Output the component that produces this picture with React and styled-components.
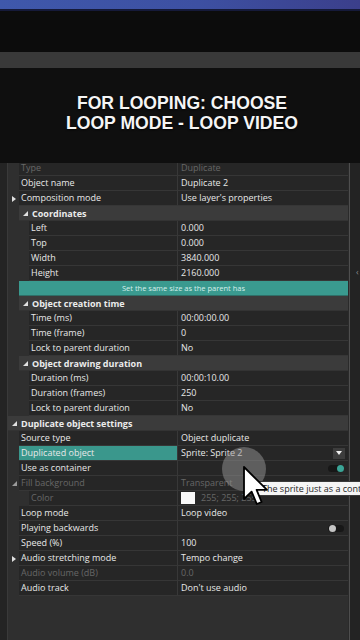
import React from 'react';
import styled, { createGlobalStyle } from 'styled-components';

const GlobalStyle = createGlobalStyle`
  html, body { margin: 0; padding: 0; background: #0e0e0e; }
  body { width: 360px; height: 640px; overflow: hidden; }
  #root { width: 360px; height: 640px; }
`;

const Screen = styled.div`
  width: 360px;
  height: 640px;
  display: flex;
  flex-direction: column;
  overflow: hidden;
  position: relative;
  font-family: "Open Sans", "Noto Sans", sans-serif;
`;

const TopBar = styled.div`
  flex: none;
  height: 9px;
  background: linear-gradient(90deg, #3f58ab 0%, #3d50a2 55%, #3b3f8b 100%);
  border-bottom: 2px solid #151a3a;
`;

const BlackBand = styled.div`
  flex: none;
  height: 41px;
  background: #0c0c0c;
`;

const GrayStrip = styled.div`
  flex: none;
  height: 16px;
  background: #393939;
`;

const Caption = styled.div`
  flex: none;
  height: 95px;
  background: #0f0f0f;
  display: flex;
  align-items: center;
  justify-content: center;
  padding: 0 0 5px 4px;
  box-sizing: border-box;
`;

const CaptionText = styled.div`
  font-family: "Liberation Sans", Arial, sans-serif;
  font-weight: 700;
  font-size: 17.6px;
  line-height: 20px;
  color: #f5f5f5;
  text-align: center;
  text-shadow: 0 1px 2px rgba(0, 0, 0, 0.8);
`;

const Panel = styled.div`
  flex: 1;
  display: flex;
  background: #262626;
  overflow: hidden;
`;

const LeftRail = styled.div`
  flex: none;
  width: 7px;
  background: #242424;
  border-right: 1px solid #3a3a3a;
`;

const Tree = styled.div`
  flex: none;
  width: 340px;
  margin-top: -2px;
  background: #2f2f2f;
  display: flex;
  flex-direction: column;
`;

const RightGap = styled.div`
  flex: none;
  width: 1px;
  background: #2a2a2a;
`;

const RightLine = styled.div`
  flex: none;
  width: 1px;
  background: #4e4e4e;
`;

const RightArea = styled.div`
  flex: 1;
  background: #232323;
  color: #8a8a8a;
  font-size: 9px;
  padding: 102px 0 0 6px;
`;

const Row = styled.div`
  flex: none;
  display: flex;
  height: 15px;
  font-size: 9px;
`;

const Indent = styled.div`
  flex: none;
  width: ${(p) => p.$w}px;
  display: flex;
  align-items: center;
  padding-left: 4px;
  box-sizing: border-box;
`;

const NameCell = styled.div`
  flex: 1;
  min-width: 0;
  background: ${(p) => (p.$selected ? '#3a978c' : '#262626')};
  border-bottom: 1px solid #363636;
  border-right: 1px solid #383838;
  color: ${(p) => (p.$disabled ? '#676767' : '#e8e8e8')};
  padding-left: 2px;
  line-height: 14px;
  white-space: nowrap;
  overflow: hidden;
`;

const ValueCell = styled.div`
  flex: none;
  width: 170px;
  box-sizing: border-box;
  background: #262626;
  border-bottom: 1px solid #363636;
  color: ${(p) => (p.$disabled ? '#676767' : '#e8e8e8')};
  padding: 0 3px 0 3px;
  display: flex;
  align-items: center;
  gap: 6px;
  line-height: 14px;
  white-space: nowrap;
  overflow: hidden;
`;

const HeaderRow = styled.div`
  flex: none;
  height: 15px;
  margin-left: ${(p) => p.$indent}px;
  background: #3b3b3b;
  border-bottom: 1px solid #333;
  display: flex;
  align-items: center;
  gap: 4px;
  padding-left: 4px;
  box-sizing: border-box;
  font-size: 9px;
  font-weight: 700;
  color: #ececec;
`;

const ActionRow = styled.div`
  flex: none;
  height: 15px;
  margin-left: 11px;
  background: #3a9a8f;
  border-bottom: 1px solid #2f6f68;
  box-sizing: border-box;
  display: flex;
  align-items: center;
  justify-content: center;
  font-size: 7.5px;
  color: #d6efeb;
`;

const Swatch = styled.span`
  flex: none;
  width: 14px;
  height: 12px;
  background: #f8f8f8;
`;

const DropButton = styled.span`
  margin-left: auto;
  width: 12px;
  height: 11px;
  background: #3d3d3d;
  display: flex;
  align-items: center;
  justify-content: center;
`;

const Toggle = styled.span`
  margin-left: auto;
  margin-right: 1px;
  position: relative;
  width: 16px;
  height: 7px;
  border-radius: 4px;
  background: #171717;
`;

const Knob = styled.span`
  position: absolute;
  top: 0;
  ${(p) => (p.$on ? 'right: 0;' : 'left: 1px;')}
  width: 7px;
  height: 7px;
  border-radius: 50%;
  background: ${(p) => (p.$on ? '#3ba597' : '#c4c4c4')};
`;

const ClickHalo = styled.div`
  position: absolute;
  left: 222px;
  top: 447px;
  width: 44px;
  height: 44px;
  border-radius: 50%;
  background: rgba(150, 150, 150, 0.5);
`;

const Tooltip = styled.div`
  position: absolute;
  left: 257px;
  top: 481px;
  width: 103px;
  height: 15px;
  box-sizing: border-box;
  background: #f5f5f5;
  border: 1px solid #3a3a3a;
  border-right: none;
  color: #1e1e1e;
  font-size: 9px;
  line-height: 13px;
  padding-left: 4px;
  white-space: nowrap;
  overflow: hidden;
`;

const Cursor = styled.svg`
  position: absolute;
  left: 243px;
  top: 466px;
`;

const ExpandRight = ({ color = '#e0e0e0' }) => (
  <svg width="4" height="6" viewBox="0 0 4 6">
    <path d="M0 0 L4 3 L0 6 Z" fill={color} />
  </svg>
);

const ExpandDown = ({ color = '#e0e0e0' }) => (
  <svg width="5" height="5" viewBox="0 0 5 5">
    <path d="M5 0 L5 5 L0 5 Z" fill={color} />
  </svg>
);

const rows = [
  { name: 'Type', value: 'Duplicate', indent: 11, disabled: true },
  { name: 'Object name', value: 'Duplicate 2', indent: 11 },
  { name: 'Composition mode', value: "Use layer's properties", indent: 11, expander: 'right' },
  { header: 'Coordinates', indent: 11 },
  { name: 'Left', value: '0.000', indent: 21 },
  { name: 'Top', value: '0.000', indent: 21 },
  { name: 'Width', value: '3840.000', indent: 21 },
  { name: 'Height', value: '2160.000', indent: 21 },
  { action: 'Set the same size as the parent has' },
  { header: 'Object creation time', indent: 11 },
  { name: 'Time (ms)', value: '00:00:00.00', indent: 21 },
  { name: 'Time (frame)', value: '0', indent: 21 },
  { name: 'Lock to parent duration', value: 'No', indent: 21 },
  { header: 'Object drawing duration', indent: 11 },
  { name: 'Duration (ms)', value: '00:00:10.00', indent: 21 },
  { name: 'Duration (frames)', value: '250', indent: 21 },
  { name: 'Lock to parent duration', value: 'No', indent: 21 },
  { header: 'Duplicate object settings', indent: 0 },
  { name: 'Source type', value: 'Object duplicate', indent: 11 },
  { name: 'Duplicated object', value: 'Sprite: Sprite 2', indent: 11, selected: true, dropdown: true },
  { name: 'Use as container', indent: 11, toggle: 'on' },
  { name: 'Fill background', value: 'Transparent', indent: 11, disabled: true, expander: 'down' },
  { name: 'Color', value: '255; 255; 255', indent: 21, disabled: true, swatch: true },
  { name: 'Loop mode', value: 'Loop video', indent: 11 },
  { name: 'Playing backwards', indent: 11, toggle: 'off' },
  { name: 'Speed (%)', value: '100', indent: 11 },
  { name: 'Audio stretching mode', value: 'Tempo change', indent: 11, expander: 'right' },
  { name: 'Audio volume (dB)', value: '0.0', indent: 11, disabled: true },
  { name: 'Audio track', value: "Don't use audio", indent: 11 },
];

function PropertyRow({ r }) {
  if (r.header) {
    return (
      <HeaderRow $indent={r.indent}>
        <ExpandDown />
        <span>{r.header}</span>
      </HeaderRow>
    );
  }
  if (r.action) {
    return <ActionRow>{r.action}</ActionRow>;
  }
  return (
    <Row>
      <Indent $w={r.indent}>
        {r.expander === 'right' && <ExpandRight />}
        {r.expander === 'down' && <ExpandDown color="#9a9a9a" />}
      </Indent>
      <NameCell $selected={r.selected} $disabled={r.disabled}>{r.name}</NameCell>
      <ValueCell $disabled={r.disabled}>
        {r.swatch && <Swatch />}
        {r.value && <span>{r.value}</span>}
        {r.dropdown && (
          <DropButton>
            <svg width="6" height="4" viewBox="0 0 6 4">
              <path d="M0 0 L6 0 L3 4 Z" fill="#f0f0f0" />
            </svg>
          </DropButton>
        )}
        {r.toggle && (
          <Toggle>
            <Knob $on={r.toggle === 'on'} />
          </Toggle>
        )}
      </ValueCell>
    </Row>
  );
}

export default function App() {
  return (
    <>
      <GlobalStyle />
      <Screen>
        <TopBar />
        <BlackBand />
        <GrayStrip />
        <Caption>
          <CaptionText>
            FOR LOOPING: CHOOSE
            <br />
            LOOP MODE - LOOP VIDEO
          </CaptionText>
        </Caption>
        <Panel>
          <LeftRail />
          <Tree>
            {rows.map((r, i) => (
              <PropertyRow key={i} r={r} />
            ))}
          </Tree>
          <RightGap />
          <RightLine />
          <RightArea>‹</RightArea>
        </Panel>
        <ClickHalo />
        <Tooltip>The sprite just as a container</Tooltip>
        <Cursor width="26" height="40" viewBox="0 0 13 20">
          <path
            d="M0.5 0.5 L0.5 16.5 L4.3 12.8 L6.9 19 L9.3 18 L6.8 11.9 L12 11.9 Z"
            fill="#ffffff"
            stroke="#000000"
            strokeWidth="0.9"
            strokeLinejoin="round"
          />
        </Cursor>
      </Screen>
    </>
  );
}
